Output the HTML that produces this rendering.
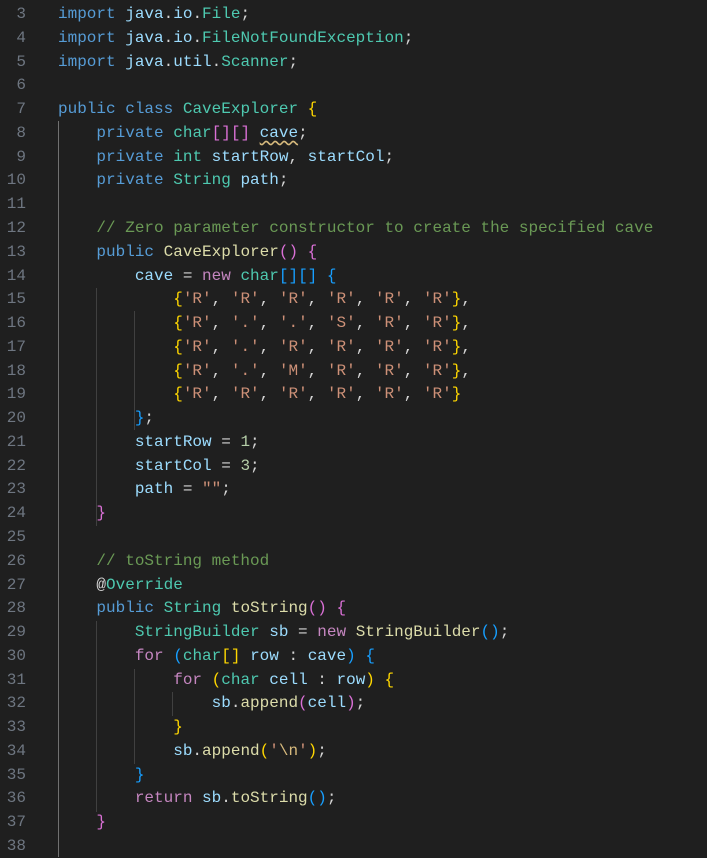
<!DOCTYPE html>
<html><head><meta charset="utf-8"><style>
html,body{margin:0;padding:0;background:#1f1f1f;width:707px;height:857px;overflow:hidden;}
.l{position:absolute;left:0;height:24px;line-height:24px;font-family:"Liberation Mono",monospace;font-size:16px;white-space:pre;color:#d4d4d4;}
.n{position:absolute;left:0;width:26px;text-align:right;color:#6e7681;}
.c{position:absolute;left:58px;}
.g{position:absolute;width:1px;background:#404040;}
.k{color:#569cd6}.t{color:#4ec9b0}.v{color:#9cdcfe}.m{color:#dcdcaa}.s{color:#ce9178}.nu{color:#b5cea8}
.cm{color:#6a9955}.p{color:#c586c0}.b1{color:#ffd700}.b2{color:#da70d6}.b3{color:#179fff}
.sq{text-decoration:underline wavy #d7ba7d;text-underline-offset:3px;}
</style></head><body>
<div class="g" style="left:58px;top:121px;height:736px;background:#707070"></div>
<div class="g" style="left:96px;top:288px;height:238px"></div>
<div class="g" style="left:96px;top:621px;height:191px"></div>
<div class="g" style="left:134px;top:311px;height:119px"></div>
<div class="g" style="left:134px;top:669px;height:95px"></div>
<div class="g" style="left:172px;top:692px;height:24px"></div>

<div class="l" style="top:2px"><span class="n">3</span><span class="c"><span class="k">import</span> <span class="v">java</span>.<span class="v">io</span>.<span class="t">File</span>;</span></div>
<div class="l" style="top:25.8px"><span class="n">4</span><span class="c"><span class="k">import</span> <span class="v">java</span>.<span class="v">io</span>.<span class="t">FileNotFoundException</span>;</span></div>
<div class="l" style="top:49.5px"><span class="n">5</span><span class="c"><span class="k">import</span> <span class="v">java</span>.<span class="v">util</span>.<span class="t">Scanner</span>;</span></div>
<div class="l" style="top:73.3px"><span class="n">6</span></div>
<div class="l" style="top:97.1px"><span class="n">7</span><span class="c"><span class="k">public</span> <span class="k">class</span> <span class="t">CaveExplorer</span> <span class="b1">{</span></span></div>
<div class="l" style="top:120.9px"><span class="n">8</span><span class="c">    <span class="k">private</span> <span class="t">char</span><span class="b2">[][]</span> <span class="v sq">cave</span>;</span></div>
<div class="l" style="top:144.6px"><span class="n">9</span><span class="c">    <span class="k">private</span> <span class="t">int</span> <span class="v">startRow</span>, <span class="v">startCol</span>;</span></div>
<div class="l" style="top:168.4px"><span class="n">10</span><span class="c">    <span class="k">private</span> <span class="t">String</span> <span class="v">path</span>;</span></div>
<div class="l" style="top:192.2px"><span class="n">11</span></div>
<div class="l" style="top:215.9px"><span class="n">12</span><span class="c">    <span class="cm">// Zero parameter constructor to create the specified cave</span></span></div>
<div class="l" style="top:239.7px"><span class="n">13</span><span class="c">    <span class="k">public</span> <span class="m">CaveExplorer</span><span class="b2">()</span> <span class="b2">{</span></span></div>
<div class="l" style="top:263.5px"><span class="n">14</span><span class="c">        <span class="v">cave</span> = <span class="p">new</span> <span class="t">char</span><span class="b3">[][]</span> <span class="b3">{</span></span></div>
<div class="l" style="top:287.2px"><span class="n">15</span><span class="c">            <span class="b1">{</span><span class="s">'R'</span>, <span class="s">'R'</span>, <span class="s">'R'</span>, <span class="s">'R'</span>, <span class="s">'R'</span>, <span class="s">'R'</span><span class="b1">}</span>,</span></div>
<div class="l" style="top:311px"><span class="n">16</span><span class="c">            <span class="b1">{</span><span class="s">'R'</span>, <span class="s">'.'</span>, <span class="s">'.'</span>, <span class="s">'S'</span>, <span class="s">'R'</span>, <span class="s">'R'</span><span class="b1">}</span>,</span></div>
<div class="l" style="top:334.8px"><span class="n">17</span><span class="c">            <span class="b1">{</span><span class="s">'R'</span>, <span class="s">'.'</span>, <span class="s">'R'</span>, <span class="s">'R'</span>, <span class="s">'R'</span>, <span class="s">'R'</span><span class="b1">}</span>,</span></div>
<div class="l" style="top:358.6px"><span class="n">18</span><span class="c">            <span class="b1">{</span><span class="s">'R'</span>, <span class="s">'.'</span>, <span class="s">'M'</span>, <span class="s">'R'</span>, <span class="s">'R'</span>, <span class="s">'R'</span><span class="b1">}</span>,</span></div>
<div class="l" style="top:382.3px"><span class="n">19</span><span class="c">            <span class="b1">{</span><span class="s">'R'</span>, <span class="s">'R'</span>, <span class="s">'R'</span>, <span class="s">'R'</span>, <span class="s">'R'</span>, <span class="s">'R'</span><span class="b1">}</span></span></div>
<div class="l" style="top:406.1px"><span class="n">20</span><span class="c">        <span class="b3">}</span>;</span></div>
<div class="l" style="top:429.9px"><span class="n">21</span><span class="c">        <span class="v">startRow</span> = <span class="nu">1</span>;</span></div>
<div class="l" style="top:453.6px"><span class="n">22</span><span class="c">        <span class="v">startCol</span> = <span class="nu">3</span>;</span></div>
<div class="l" style="top:477.4px"><span class="n">23</span><span class="c">        <span class="v">path</span> = <span class="s">""</span>;</span></div>
<div class="l" style="top:501.2px"><span class="n">24</span><span class="c">    <span class="b2">}</span></span></div>
<div class="l" style="top:524.9px"><span class="n">25</span></div>
<div class="l" style="top:548.7px"><span class="n">26</span><span class="c">    <span class="cm">// toString method</span></span></div>
<div class="l" style="top:572.5px"><span class="n">27</span><span class="c">    @<span class="t">Override</span></span></div>
<div class="l" style="top:596.2px"><span class="n">28</span><span class="c">    <span class="k">public</span> <span class="t">String</span> <span class="m">toString</span><span class="b2">()</span> <span class="b2">{</span></span></div>
<div class="l" style="top:620px"><span class="n">29</span><span class="c">        <span class="t">StringBuilder</span> <span class="v">sb</span> = <span class="p">new</span> <span class="m">StringBuilder</span><span class="b3">()</span>;</span></div>
<div class="l" style="top:643.8px"><span class="n">30</span><span class="c">        <span class="p">for</span> <span class="b3">(</span><span class="t">char</span><span class="b1">[]</span> <span class="v">row</span> : <span class="v">cave</span><span class="b3">)</span> <span class="b3">{</span></span></div>
<div class="l" style="top:667.6px"><span class="n">31</span><span class="c">            <span class="p">for</span> <span class="b1">(</span><span class="t">char</span> <span class="v">cell</span> : <span class="v">row</span><span class="b1">)</span> <span class="b1">{</span></span></div>
<div class="l" style="top:691.3px"><span class="n">32</span><span class="c">                <span class="v">sb</span>.<span class="m">append</span><span class="b2">(</span><span class="v">cell</span><span class="b2">)</span>;</span></div>
<div class="l" style="top:715.1px"><span class="n">33</span><span class="c">            <span class="b1">}</span></span></div>
<div class="l" style="top:738.9px"><span class="n">34</span><span class="c">            <span class="v">sb</span>.<span class="m">append</span><span class="b1">(</span><span class="s">'</span><span style="color:#d7ba7d">\n</span><span class="s">'</span><span class="b1">)</span>;</span></div>
<div class="l" style="top:762.6px"><span class="n">35</span><span class="c">        <span class="b3">}</span></span></div>
<div class="l" style="top:786.4px"><span class="n">36</span><span class="c">        <span class="p">return</span> <span class="v">sb</span>.<span class="m">toString</span><span class="b3">()</span>;</span></div>
<div class="l" style="top:810.2px"><span class="n">37</span><span class="c">    <span class="b2">}</span></span></div>
<div class="l" style="top:833.9px"><span class="n">38</span></div>
</body></html>
